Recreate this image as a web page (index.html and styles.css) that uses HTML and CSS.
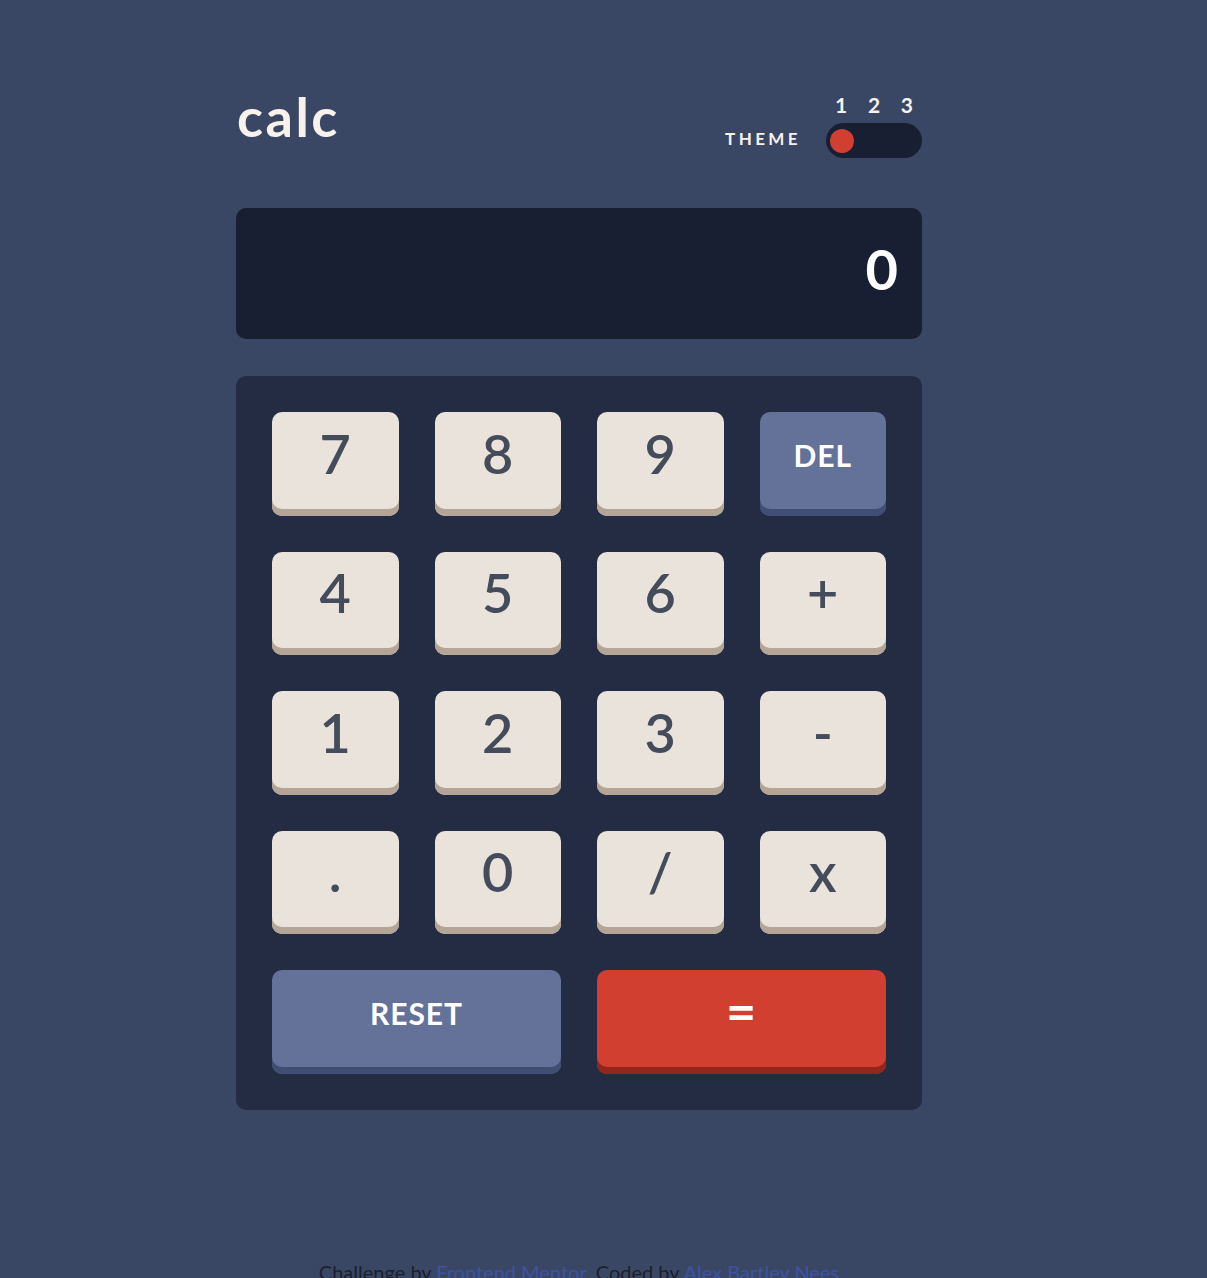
FILE: index.html
```html
<!DOCTYPE html>
<html lang="en">
<head>
<meta charset="utf-8">
<title>Calculator app</title>
<link rel="stylesheet" href="styles.css">
</head>
<body>
<main class="calc">
  <header class="top">
    <h1 class="logo">calc</h1>
    <div class="theme">
      <span class="theme-label">THEME</span>
      <div class="switch">
        <div class="switch-nums"><span>1</span><span>2</span><span>3</span></div>
        <div class="switch-track"><span class="switch-knob"></span></div>
      </div>
    </div>
  </header>
  <section class="screen"><span class="screen-value">0</span></section>
  <section class="pad">
    <button class="key">7</button>
    <button class="key">8</button>
    <button class="key">9</button>
    <button class="key key-blue key-word">DEL</button>
    <button class="key">4</button>
    <button class="key">5</button>
    <button class="key">6</button>
    <button class="key">+</button>
    <button class="key">1</button>
    <button class="key">2</button>
    <button class="key">3</button>
    <button class="key">-</button>
    <button class="key">.</button>
    <button class="key">0</button>
    <button class="key">/</button>
    <button class="key">x</button>
    <button class="key key-blue key-word key-wide">RESET</button>
    <button class="key key-red key-word key-wide key-eq">=</button>
  </section>
</main>
<footer class="attribution">
  Challenge by <a href="#">Frontend Mentor</a>. Coded by <a href="#">Alex Bartley Nees</a>
</footer>
</body>
</html>
```
FILE: styles.css
```css
html, body {
  margin: 0;
  padding: 0;
}
body {
  background: #3a4764;
  font-family: "Lato", "Liberation Sans", sans-serif;
  padding-right: 49px;
  min-height: 1300px;
}
.calc {
  width: 686px;
  margin: 0 auto;
  padding-top: 88px;
}
.top {
  display: flex;
  justify-content: space-between;
  align-items: flex-end;
  height: 70px;
}
.logo {
  margin: 0 0 14px 1px;
  font-size: 54px;
  font-weight: 700;
  color: #f8f1ec;
  line-height: 1;
  letter-spacing: 2.5px;
}
.theme {
  display: flex;
  align-items: flex-end;
  gap: 25px;
}
.theme-label {
  color: #f8f1ec;
  font-size: 17px;
  font-weight: 700;
  letter-spacing: 3.4px;
  margin-bottom: 9px;
}
.switch {
  width: 96px;
  display: flex;
  flex-direction: column;
  gap: 6px;
}
.switch-nums {
  display: flex;
  justify-content: space-between;
  padding: 0 9px 0 9px;
  color: #f8f1ec;
  font-size: 21px;
  font-weight: 700;
  line-height: 24px;
}
.switch-track {
  height: 35px;
  border-radius: 18px;
  background: #181f33;
  display: flex;
  align-items: center;
  padding-left: 4px;
}
.switch-knob {
  width: 24px;
  height: 24px;
  border-radius: 50%;
  background: #d03f2f;
}
.screen {
  margin-top: 50px;
  height: 131px;
  border-radius: 10px;
  background: #181f33;
  display: flex;
  align-items: center;
  justify-content: flex-end;
  padding-right: 24px;
  box-sizing: border-box;
}
.screen-value {
  color: #ffffff;
  font-size: 56px;
  font-weight: 700;
  margin-bottom: 10px;
}
.pad {
  margin-top: 37px;
  background: #232c43;
  border-radius: 10px;
  padding: 36px;
  display: grid;
  grid-template-columns: repeat(4, 1fr);
  column-gap: 36px;
  row-gap: 36px;
}
.key {
  height: 103.5px;
  border: none;
  border-radius: 10px;
  background: #eae3dc;
  box-shadow: inset 0 -7px 0 #b4a597;
  color: #444b5a;
  font-family: inherit;
  font-size: 54px;
  font-weight: 600;
  padding: 0 0 20px 0;
  cursor: pointer;
  line-height: 1;
}
.key-word {
  font-size: 30px;
  letter-spacing: 1px;
  color: #ffffff;
  font-weight: 700;
  padding-bottom: 18px;
}
.key-blue {
  background: #647198;
  box-shadow: inset 0 -7px 0 #414e73;
}
.key-red {
  background: #d03f2f;
  box-shadow: inset 0 -7px 0 #93261a;
}
.key-eq {
  font-size: 52px;
  padding-bottom: 24px;
}
.key-wide {
  grid-column: span 2;
}
.attribution {
  margin-top: 150px;
  text-align: center;
  font-size: 20px;
  color: #1b1f2b;
  width: 686px;
  margin-left: auto;
  margin-right: auto;
}
.attribution a {
  color: #3e52a3;
  text-decoration: none;
}
```
